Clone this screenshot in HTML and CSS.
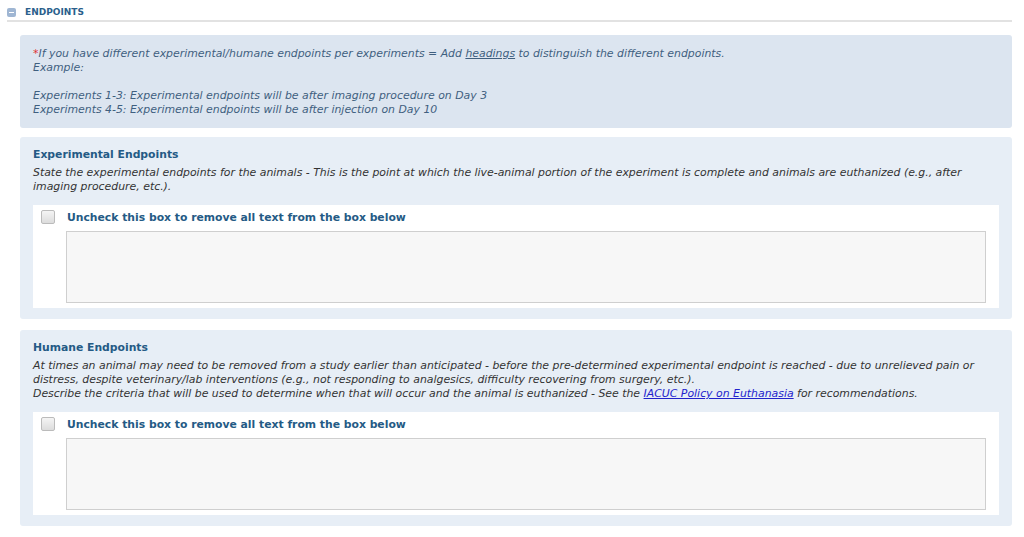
FILE: index.html
```html
<!DOCTYPE html>
<html lang="en">
<head>
    <meta charset="UTF-8">
    <meta name="viewport" content="width=device-width, initial-scale=1.0">
    <link rel="stylesheet" href="styles.css">
</head>
<body>

<div class="section-head">
    <span class="toggle"><span class="bar"></span></span>
    <span class="section-title">Endpoints</span>
</div>

<div class="info">
    <p><span class="req">*</span>If you have different experimental/humane endpoints per experiments = Add <u>headings</u> to distinguish the different endpoints.<br>
    Example:</p>
    <p>Experiments 1-3: Experimental endpoints will be after imaging procedure on Day 3<br>
    Experiments 4-5: Experimental endpoints will be after injection on Day 10</p>
</div>

<div class="card">
    <div class="card-title">Experimental Endpoints</div>
    <div class="card-desc">State the experimental endpoints for the animals - This is the point at which the live-animal portion of the experiment is complete and animals are euthanized (e.g., after imaging procedure, etc.).</div>
    <div class="field">
        <label class="check-row"><span class="check"></span>Uncheck this box to remove all text from the box below</label>
        <div class="textbox"></div>
    </div>
</div>

<div class="card">
    <div class="card-title">Humane Endpoints</div>
    <div class="card-desc">At times an animal may need to be removed from a study earlier than anticipated - before the pre-determined experimental endpoint is reached - due to unrelieved pain or distress, despite veterinary/lab interventions (e.g., not responding to analgesics, difficulty recovering from surgery, etc.).<br>
    Describe the criteria that will be used to determine when that will occur and the animal is euthanized - See the <a href="#">IACUC Policy on Euthanasia</a> for recommendations.</div>
    <div class="field">
        <label class="check-row"><span class="check"></span>Uncheck this box to remove all text from the box below</label>
        <div class="textbox"></div>
    </div>
</div>

</body>
</html>
```

FILE: styles.css
```css
body {
    font-family: "DejaVu Sans", Verdana, sans-serif;
    font-size: 10.9px;
    color: #333;
    background: #fff;
    margin: 0;
    padding: 6px 12px 0 7px;
}
.section-head {
    display: flex;
    align-items: center;
    gap: 9px;
    height: 12px;
    padding-bottom: 2px;
    border-bottom: 2px solid #e2e2e2;
}
.toggle {
    width: 9px;
    height: 9px;
    background: #9fb6d3;
    border-radius: 2px;
    display: flex;
    align-items: center;
    justify-content: center;
}
.toggle .bar {
    width: 5px;
    height: 1px;
    background: #fff;
}
.section-title {
    font-size: 9px;
    font-weight: bold;
    text-transform: uppercase;
    color: #2b5f8c;
}
.info {
    margin: 13px 0 0 13px;
    background: #dce5f0;
    border-radius: 3px;
    padding: 12px 13px 11px;
    color: #3f5f7f;
    font-style: italic;
    line-height: 14px;
}
.info p {
    margin: 0 0 14px;
}
.info p:last-child {
    margin: 0;
}
.req {
    color: #e03030;
}
.card {
    margin: 9px 0 0 13px;
    background: #e7eef6;
    border-radius: 3px;
    padding: 11px 13px 11px;
}
.card + .card {
    margin-top: 11px;
}
.card-title {
    font-weight: bold;
    font-size: 10.8px;
    color: #245a85;
    line-height: 14px;
    margin-bottom: 4px;
}
.card-desc {
    font-style: italic;
    line-height: 14px;
    color: #333;
}
.card-desc a {
    color: #2222cc;
}
.field {
    background: #fff;
    margin-top: 11px;
    padding: 5px 13px 5px 8px;
}
.check-row {
    display: flex;
    align-items: center;
    gap: 12px;
    font-weight: bold;
    color: #245a85;
    height: 14px;
    font-size: 10.8px;
}
.check {
    width: 12px;
    height: 12px;
    border: 1px solid #bbb;
    border-radius: 2px;
    background: linear-gradient(#f4f4f4, #dcdcdc);
}
.textbox {
    margin: 7px 0 0 25px;
    height: 70px;
    background: #f7f7f7;
    border: 1px solid #cfcfcf;
}
```
